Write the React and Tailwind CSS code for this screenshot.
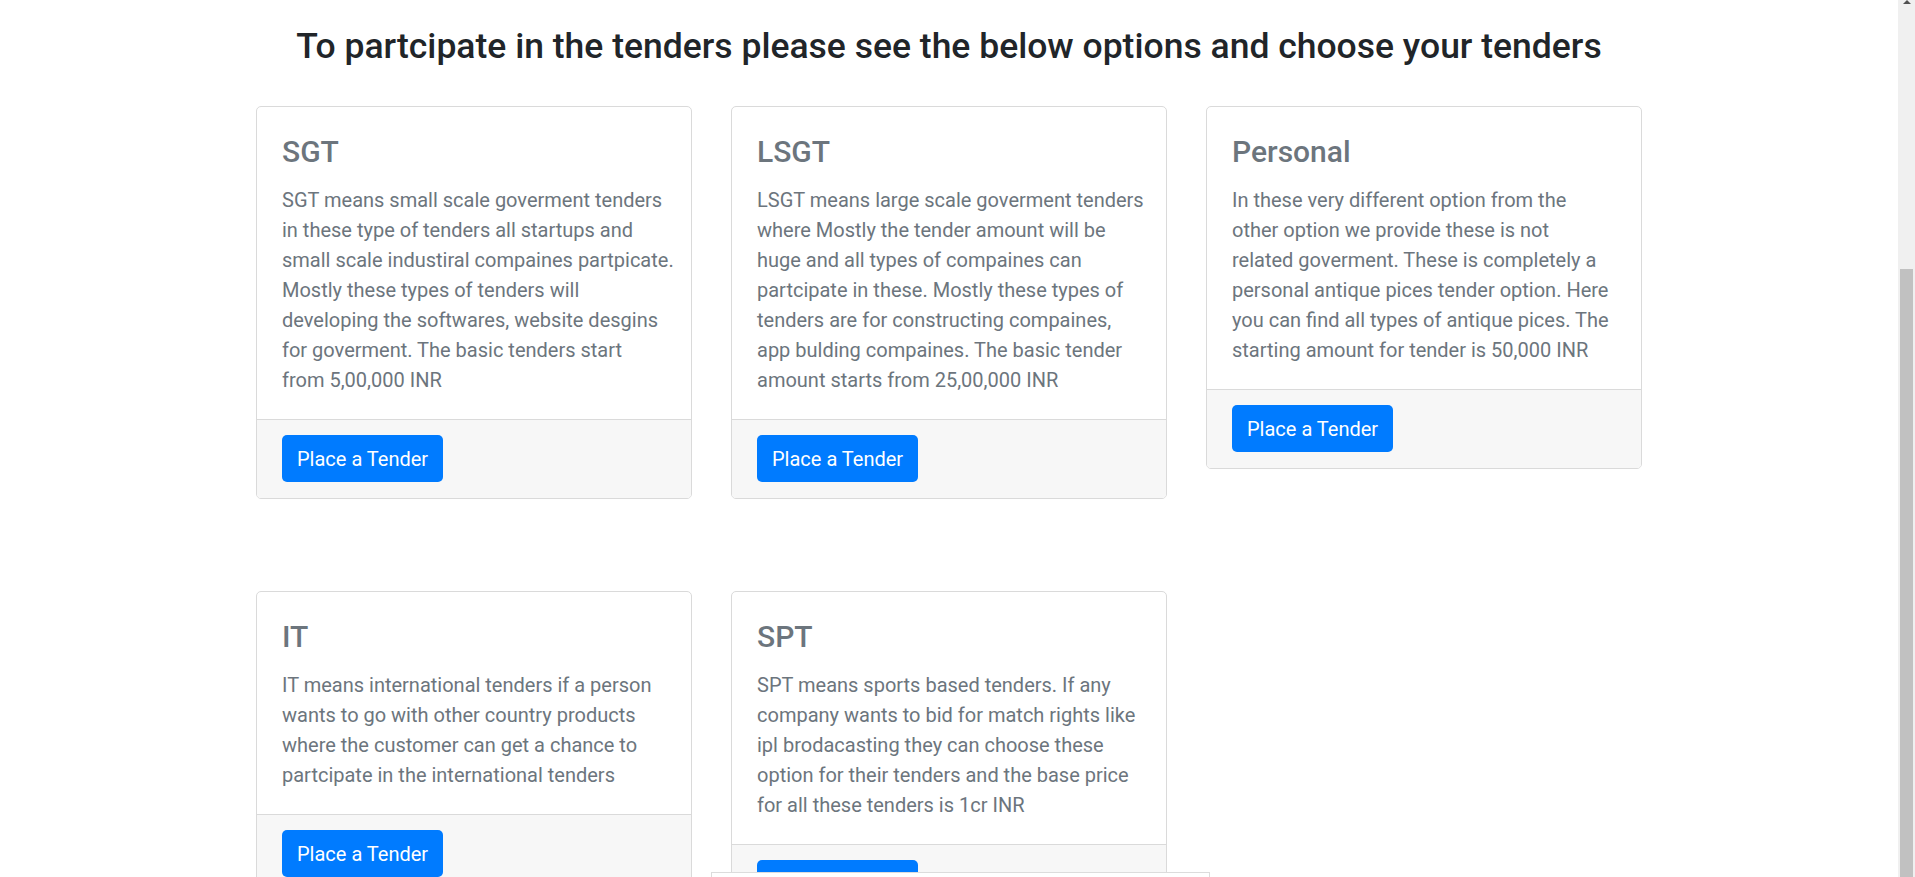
import React from 'react'

const tenders = [
  {
    title: 'SGT',
    lines: [
      'SGT means small scale goverment tenders',
      'in these type of tenders all startups and',
      'small scale industiral compaines partpicate.',
      'Mostly these types of tenders will',
      'developing the softwares, website desgins',
      'for goverment. The basic tenders start',
      'from 5,00,000 INR',
    ],
  },
  {
    title: 'LSGT',
    lines: [
      'LSGT means large scale goverment tenders',
      'where Mostly the tender amount will be',
      'huge and all types of compaines can',
      'partcipate in these. Mostly these types of',
      'tenders are for constructing compaines,',
      'app bulding compaines. The basic tender',
      'amount starts from 25,00,000 INR',
    ],
  },
  {
    title: 'Personal',
    lines: [
      'In these very different option from the',
      'other option we provide these is not',
      'related goverment. These is completely a',
      'personal antique pices tender option. Here',
      'you can find all types of antique pices. The',
      'starting amount for tender is 50,000 INR',
    ],
  },
  {
    title: 'IT',
    lines: [
      'IT means international tenders if a person',
      'wants to go with other country products',
      'where the customer can get a chance to',
      'partcipate in the international tenders',
    ],
  },
  {
    title: 'SPT',
    lines: [
      'SPT means sports based tenders. If any',
      'company wants to bid for match rights like',
      'ipl brodacasting they can choose these',
      'option for their tenders and the base price',
      'for all these tenders is 1cr INR',
    ],
  },
]

function TenderCard({ title, lines }) {
  return (
    <div className="flex flex-col rounded-[5px] border border-[#dadada] bg-white overflow-hidden">
      <div className="px-[25px] pt-[27px] pb-[24px]">
        <h4 className="text-[30px] leading-[36px] font-medium text-[#6c757d] mb-[15px]">{title}</h4>
        <p className="text-[20px] leading-[30px] text-[#6c757d]">
          {lines.map((l, i) => (
            <span key={i} className="block whitespace-nowrap">{l}</span>
          ))}
        </p>
      </div>
      <div className="border-t border-[#dadada] bg-[#f7f7f7] px-[25px] pt-[15px] pb-[16px]">
        <button className="h-[47px] px-[15px] rounded-[5px] bg-[#007bff] text-white text-[20px] leading-[30px]">
          Place a Tender
        </button>
      </div>
    </div>
  )
}

export default function App() {
  return (
    <div className="h-screen overflow-hidden flex bg-white" style={{ fontFamily: 'Roboto, "Noto Sans", sans-serif' }}>
      <main className="flex-1 relative">
        <h2 className="text-center text-[35.5px] leading-[44px] font-medium text-[#212529] pt-[24px] mb-[38px]">
          To partcipate in the tenders please see the below options and choose your tenders
        </h2>

        <div className="grid grid-cols-[repeat(3,436px)] gap-x-[39px] gap-y-[92px] justify-center items-start">
          {tenders.map((t) => (
            <TenderCard key={t.title} {...t} />
          ))}
        </div>

        {/* bottom popup peeking in */}
        <div className="absolute left-[711px] top-[872px] w-[499px] h-[40px] bg-white border border-[#dcdcdc]" />
      </main>

      {/* scrollbar */}
      <div className="w-[17px] bg-[#f0f0f0] flex flex-col items-center">
        <div className="h-[269px] w-full flex justify-center">
          <div className="w-0 h-0 border-l-[4px] border-r-[4px] border-b-[4px] border-l-transparent border-r-transparent border-b-[#505050]" />
        </div>
        <div className="flex-1 w-[13px] bg-[#c1c1c1]" />
      </div>
    </div>
  )
}
